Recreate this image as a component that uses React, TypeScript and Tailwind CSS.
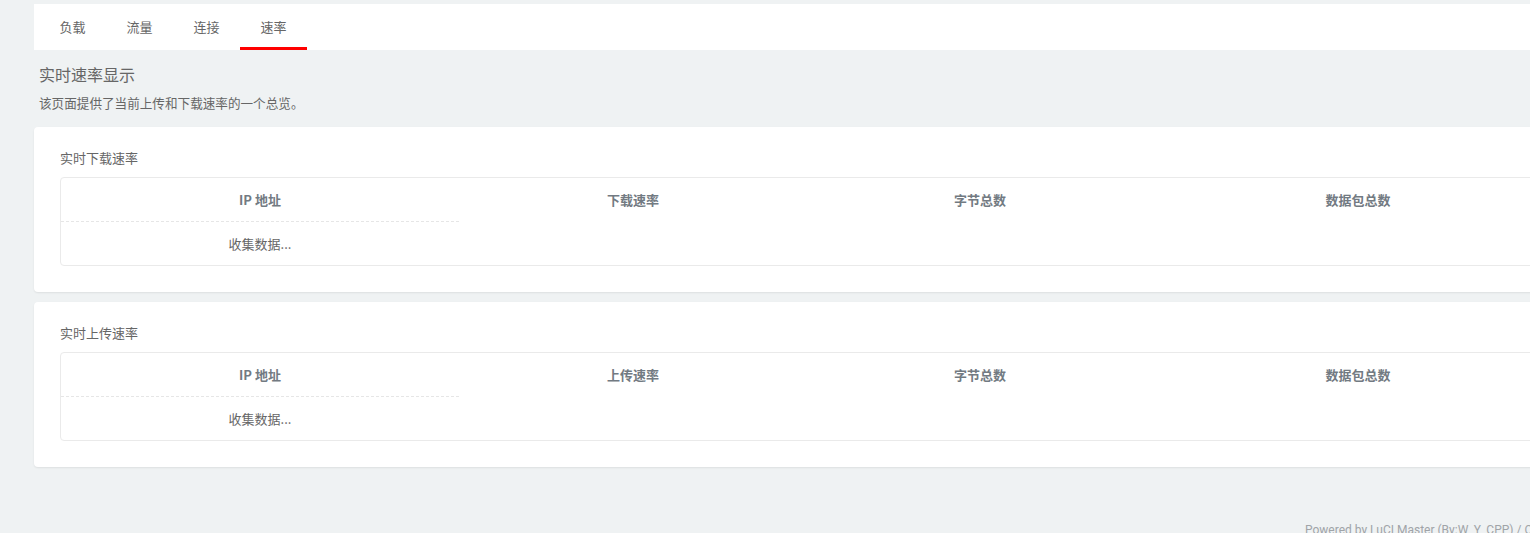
import React from "react";

const font = { fontFamily: '"Noto Sans CJK SC", "Noto Sans", sans-serif' };

const tabs = ["负载", "流量", "连接", "速率"];

function RateTable({ title, rateLabel }: { title: string; rateLabel: string }) {
  return (
    <div className="rounded-[4px] bg-white px-[26px] pt-[21px] pb-[26px] shadow-[0_1px_2px_rgba(0,0,0,0.08)]">
      <div className="h-[20px] text-[13px] leading-[20px] text-[#666]">{title}</div>
      <div className="mt-[9px] rounded-[4px] border border-[#eaeaea]">
        <div className="grid h-[43px] grid-cols-[398px_348px_346px_1fr] items-center text-[13px] font-bold text-[#727a82]">
          <div className="text-center">IP 地址</div>
          <div className="text-center">{rateLabel}</div>
          <div className="text-center">字节总数</div>
          <div className="text-center">数据包总数</div>
        </div>
        <div className="grid h-[44px] grid-cols-[398px_1fr]">
          <div className="flex items-center justify-center border-t border-dashed border-[#e6e6e6] text-[13px] text-[#666]">
            收集数据...
          </div>
          <div />
        </div>
      </div>
    </div>
  );
}

export default function App() {
  return (
    <div className="h-[533px] w-[1530px] overflow-hidden bg-[#eff2f3]" style={font}>
      <div className="w-[1590px] pl-[34px] pt-[4px]">
        <div className="flex h-[46px] bg-white pl-[5px]">
          {tabs.map((t) => (
            <div
              key={t}
              className={
                t === "速率"
                  ? "flex w-[67px] items-center justify-center border-b-[3px] border-[#ff0000] pt-[2px] text-[13px] text-[#666]"
                  : "flex w-[67px] items-center justify-center pb-[1px] text-[13px] text-[#666]"
              }
            >
              {t}
            </div>
          ))}
        </div>
        <div className="pl-[5px] pt-[13px] text-[16px] leading-[22px] text-[#666]">实时速率显示</div>
        <div className="pl-[5px] pt-[9px] text-[12.6px] leading-[18px] text-[#666]">
          该页面提供了当前上传和下载速率的一个总览。
        </div>
        <div className="mt-[15px] flex flex-col gap-[10px]">
          <RateTable title="实时下载速率" rateLabel="下载速率" />
          <RateTable title="实时上传速率" rateLabel="上传速率" />
        </div>
        <div
          className="pt-[54px] pl-[1271px] text-[12px] whitespace-nowrap text-[#a0a4a8]"
          style={{ fontFamily: '"Roboto", "Noto Sans", sans-serif' }}
        >
          Powered by LuCI Master (By:W_Y_CPP) / OpenWrt
        </div>
      </div>
    </div>
  );
}
